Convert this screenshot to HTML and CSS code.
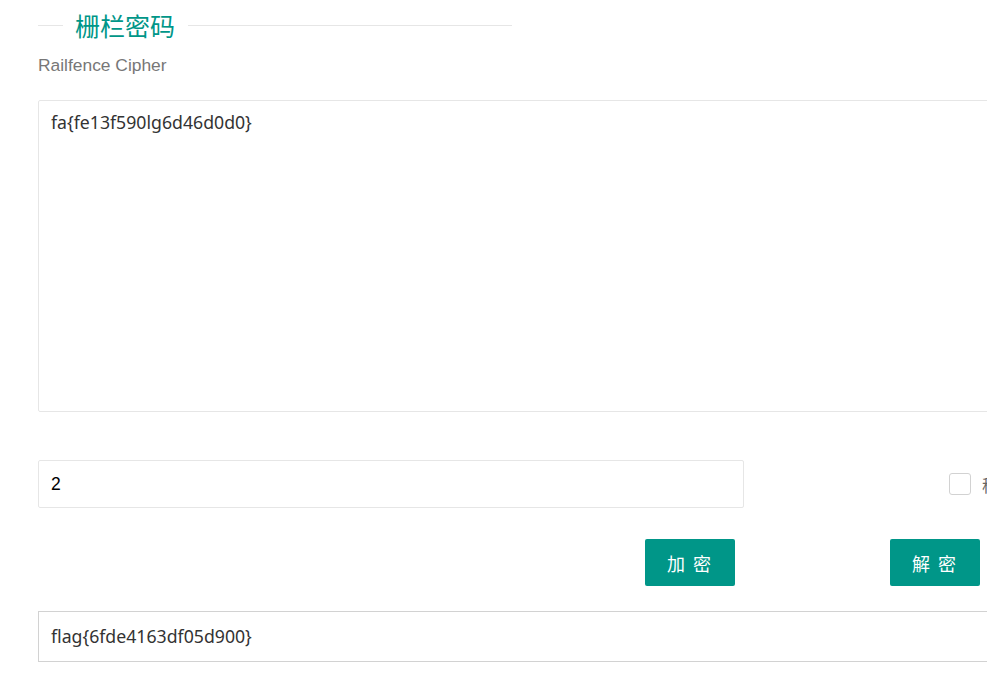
FILE: index.html
```html
<!DOCTYPE html>
<html lang="zh-CN">
<head>
<meta charset="utf-8">
<title>栅栏密码</title>
<link rel="stylesheet" href="styles.css">
</head>
<body>
<div class="page">
  <div class="title">
    <span class="title-line short"></span>
    <span class="title-text">栅栏密码</span>
    <span class="title-line long"></span>
  </div>
  <div class="subtitle">Railfence Cipher</div>
  <textarea class="source">fa{fe13f590lg6d46d0d0}</textarea>
  <div class="options">
    <input class="key" type="text" value="2">
    <label class="check"><span class="box"></span><span class="check-text">移除空格</span></label>
  </div>
  <div class="actions">
    <button class="btn">加 密</button>
    <button class="btn">解 密</button>
  </div>
  <div class="result">flag{6fde4163df05d900}</div>
</div>
</body>
</html>
```
FILE: styles.css
```css
html {
  overflow: hidden;
}
body {
  margin: 0;
  background: #fff;
  font-family: "Noto Sans", "Noto Sans CJK SC", sans-serif;
  color: #333;
}
.page {
  width: 1100px;
  padding-left: 38px;
}
.title {
  display: flex;
  align-items: center;
  width: 474px;
  height: 26px;
  margin-top: 12px;
}
.title-line {
  height: 1px;
  background: #e6e6e6;
}
.title-line.short {
  width: 25px;
}
.title-line.long {
  flex: 1;
}
.title-text {
  margin: 0 13px 0 12px;
  font-family: "Noto Sans CJK SC", sans-serif;
  font-size: 25px;
  line-height: 26px;
  color: #009688;
}
.subtitle {
  margin-top: 16px;
  font-family: "Liberation Sans", Arial, sans-serif;
  font-size: 17.4px;
  line-height: 22px;
  color: #777;
}
.source {
  display: block;
  box-sizing: border-box;
  width: 1060px;
  height: 312px;
  margin: 24px 0 0;
  padding: 9px 12px;
  border: 1px solid #e6e6e6;
  border-radius: 2px;
  resize: none;
  outline: none;
  font-family: "Noto Sans", sans-serif;
  font-size: 17.7px;
  line-height: 24px;
  color: #333;
}
.options {
  display: flex;
  align-items: center;
  margin-top: 48px;
}
.key {
  box-sizing: border-box;
  width: 706px;
  height: 48px;
  margin: 0;
  padding: 0 12px;
  border: 1px solid #e6e6e6;
  border-radius: 2px;
  outline: none;
  font-family: "Liberation Sans", Arial, sans-serif;
  font-size: 17.5px;
  color: #000;
}
.check {
  display: flex;
  align-items: center;
  margin-left: 205px;
}
.box {
  box-sizing: border-box;
  width: 22px;
  height: 22px;
  border: 1px solid #d2d2d2;
  border-radius: 3px;
}
.check-text {
  margin-left: 11px;
  font-family: "Noto Sans CJK SC", sans-serif;
  font-size: 17px;
  color: #666;
  white-space: nowrap;
}
.actions {
  display: flex;
  gap: 155px;
  margin-top: 31px;
  padding-left: 607px;
}
.btn {
  width: 90px;
  height: 47px;
  margin: 0;
  padding: 0;
  border: none;
  border-radius: 2px;
  background: #009688;
  color: #fff;
  font-family: "Noto Sans CJK SC", sans-serif;
  font-size: 18px;
  letter-spacing: 2px;
}
.result {
  box-sizing: border-box;
  width: 1060px;
  height: 51px;
  margin-top: 25px;
  padding: 0 12px;
  border: 1px solid #d2d2d2;
  font-family: "Noto Sans", sans-serif;
  font-size: 17.7px;
  line-height: 49px;
  color: #333;
}
```
